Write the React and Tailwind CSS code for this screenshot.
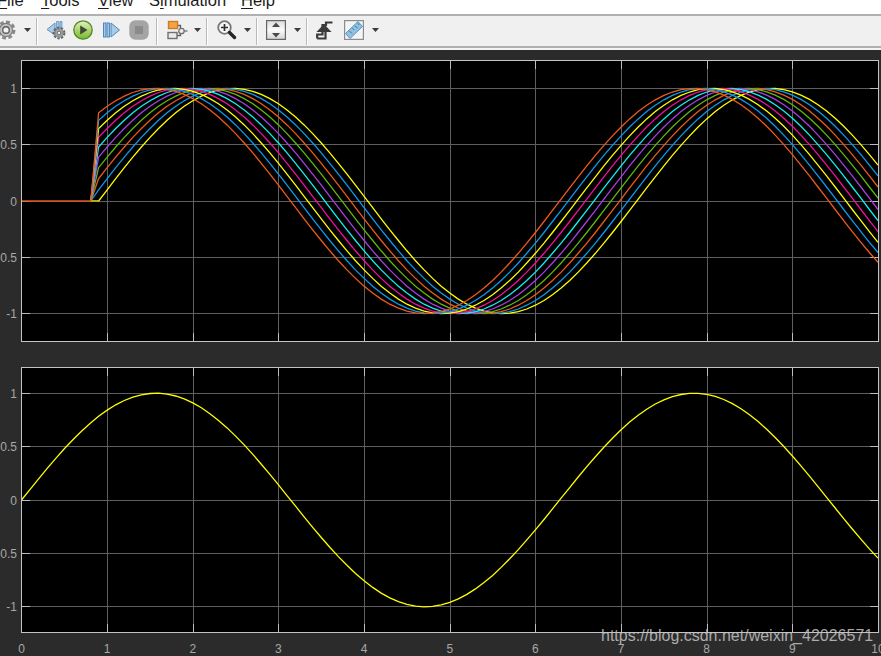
import React from "react";

const X0 = 21.5;
const XS = 85.65;
const xp = (t) => X0 + t * XS;

const SCOPE_COLORS = ["#ffff00", "#0a9bec", "#ee5a1c", "#62b80c", "#a83fe0", "#13f0f0", "#f0109c", "#ffff00", "#0a9bec", "#ee5a1c"];

// delayed sine, held at zero until the block switches on
function delayedPoints(delay, mid, ys) {
  const pts = [`${xp(0.81)},${mid}`];
  for (let i = 9; i <= 100; i++) {
    const t = i / 10;
    const v = Math.sin(Math.max(t - delay, 0));
    pts.push(`${xp(t).toFixed(1)},${(mid - v * ys).toFixed(1)}`);
  }
  return pts.join(" ");
}

function sinePoints(mid, ys) {
  const pts = [];
  for (let i = 0; i <= 100; i++) {
    const t = i / 10;
    pts.push(`${xp(t).toFixed(1)},${(mid - Math.sin(t) * ys).toFixed(1)}`);
  }
  return pts.join(" ");
}

function Plot({ height, bottom, mid, ys, showX, children }) {
  const yTicks = [
    [1, "1"],
    [0.5, "0.5"],
    [0, "0"],
    [-0.5, "-0.5"],
    [-1, "-1"],
  ];
  return (
    <svg width="881" height={height} className="block" style={{ fontFamily: '"Liberation Sans", Arial, sans-serif' }}>
      <rect x="21.5" y="0.5" width="857" height={bottom} fill="#000" />
      {[1, 2, 3, 4, 5, 6, 7, 8, 9].map((t) => (
        <g key={t}>
          <line x1={Math.round(xp(t)) + 0.5} x2={Math.round(xp(t)) + 0.5} y1="0.5" y2={bottom + 0.5} stroke="#5f5f5f" />
          <line x1={Math.round(xp(t)) + 0.5} x2={Math.round(xp(t)) + 0.5} y1="0.5" y2="9" stroke="#bdbdbd" />
          <line x1={Math.round(xp(t)) + 0.5} x2={Math.round(xp(t)) + 0.5} y1={bottom - 8} y2={bottom + 0.5} stroke="#bdbdbd" />
        </g>
      ))}
      {yTicks.map(([v, label]) => {
        const y = Math.floor(mid - v * ys) + 0.5;
        return (
          <g key={label}>
            <line x1="21.5" x2="878.5" y1={y} y2={y} stroke="#5f5f5f" />
            <line x1="21.5" x2="30" y1={y} y2={y} stroke="#bdbdbd" />
            <line x1="870" x2="878.5" y1={y} y2={y} stroke="#bdbdbd" />
            <text x="17" y={y + 4.5} textAnchor="end" fontSize="12" fill="#a8a8a8">
              {label}
            </text>
          </g>
        );
      })}
      {children}
      <rect x="21.5" y="0.5" width="857" height={bottom} fill="none" stroke="#c4c4c4" />
      {showX &&
        [0, 1, 2, 3, 4, 5, 6, 7, 8, 9, 10].map((t) => (
          <text key={t} x={xp(t)} y={bottom + 20.5} textAnchor="middle" fontSize="12" fill="#a8a8a8">
            {t}
          </text>
        ))}
    </svg>
  );
}

function Sep() {
  return <div className="w-[2px] h-[27px] mt-[3px] bg-[#b9b9b9] border-r border-white shrink-0" />;
}

function Caret() {
  return (
    <svg width="7" height="4" className="shrink-0 block">
      <path d="M0 0H7L3.5 4Z" fill="#3c3c3c" />
    </svg>
  );
}

function Gear() {
  return (
    <svg width="20" height="20" viewBox="0 0 20 20" className="shrink-0 block">
      <circle cx="10" cy="10" r="8.2" fill="none" stroke="#8a8a8a" strokeWidth="2.6" strokeDasharray="4 2.4" />
      <circle cx="10" cy="10" r="6.6" fill="#c2c2c2" stroke="#7a7a7a" strokeWidth="1.2" />
      <circle cx="10" cy="10" r="3.3" fill="#f2f2f2" stroke="#606060" strokeWidth="1.4" />
    </svg>
  );
}

function StepBack() {
  return (
    <svg width="20" height="20" viewBox="0 0 20 20" className="shrink-0 block">
      <path d="M9 3L1 9.5L9 15Z" fill="#a9cbe8" stroke="#5b93c6" />
      <path d="M10.5 1.5H13V9H10.5ZM14 1.5H16V8H14Z" fill="#a9cbe8" stroke="#5b93c6" strokeWidth="0.8" />
      <circle cx="13" cy="13" r="5.4" fill="none" stroke="#666" strokeWidth="2" strokeDasharray="2.4 1.4" />
      <circle cx="13" cy="13" r="4.2" fill="#a6a6a6" stroke="#6a6a6a" strokeWidth="0.8" />
      <circle cx="13" cy="13" r="1.8" fill="#f2f2f2" stroke="#555" strokeWidth="0.8" />
    </svg>
  );
}

function Play() {
  return (
    <svg width="20" height="20" viewBox="0 0 20 20" className="shrink-0 block">
      <defs>
        <linearGradient id="pg" x1="0" y1="0" x2="0" y2="1">
          <stop offset="0" stopColor="#e4f2bc" />
          <stop offset="1" stopColor="#79b62c" />
        </linearGradient>
      </defs>
      <circle cx="10" cy="10" r="9.2" fill="url(#pg)" stroke="#4f8a2a" strokeWidth="1.3" />
      <path d="M7.2 5.5L14.5 10L7.2 14.5Z" fill="#3b4a30" />
    </svg>
  );
}

function StepForward() {
  return (
    <svg width="18" height="18" viewBox="0 0 18 18" className="shrink-0 block">
      <rect x="0.5" y="2" width="2.4" height="14" fill="#a9cbe8" stroke="#4d86bd" />
      <rect x="4" y="2" width="2.4" height="14" fill="#a9cbe8" stroke="#4d86bd" />
      <path d="M8 2L16.5 9L8 16Z" fill="#a9cbe8" stroke="#4d86bd" />
    </svg>
  );
}

function Stop() {
  return (
    <svg width="20" height="20" viewBox="0 0 20 20" className="shrink-0 block">
      <rect x="0.3" y="0.3" width="19.4" height="19.4" rx="6" fill="#a4a4a4" />
      <rect x="6" y="6" width="8" height="8" fill="#8a8a8a" />
    </svg>
  );
}

function Library() {
  return (
    <svg width="21" height="20" viewBox="0 0 21 20" className="shrink-0 block">
      <path d="M9 5.5H13.5V9M9 15.5H13.5V13" fill="none" stroke="#5f5f5f" strokeWidth="1.3" />
      <rect x="1.5" y="1.5" width="9" height="7" fill="#f2a544" stroke="#d07a26" strokeWidth="1.4" />
      <rect x="1" y="12.5" width="9" height="6" fill="#eaeaea" stroke="#707070" strokeWidth="1.4" />
      <circle cx="14.5" cy="11" r="2.7" fill="#ececec" stroke="#707070" strokeWidth="1.3" />
      <path d="M17.2 11H20.5" stroke="#707070" strokeWidth="1.3" />
    </svg>
  );
}

function Magnifier() {
  return (
    <svg width="20" height="20" viewBox="0 0 20 20" className="shrink-0 block">
      <circle cx="7.5" cy="7.5" r="6.3" fill="#f8f8f8" stroke="#777" strokeWidth="1.8" />
      <path d="M12.5 12.5L17.5 17.5" stroke="#262626" strokeWidth="3.4" strokeLinecap="round" />
      <path d="M4 7.5H11M7.5 4V11" stroke="#303030" strokeWidth="1.7" />
    </svg>
  );
}

function Autoscale() {
  return (
    <svg width="20" height="20" viewBox="0 0 20 20" className="shrink-0 block">
      <defs>
        <linearGradient id="ag" x1="0" y1="0" x2="0" y2="1">
          <stop offset="0" stopColor="#dcdcdc" />
          <stop offset="0.5" stopColor="#fbfbfb" />
          <stop offset="1" stopColor="#d4d4d4" />
        </linearGradient>
      </defs>
      <rect x="0.6" y="0.6" width="18.8" height="18.8" fill="url(#ag)" stroke="#666" strokeWidth="1.2" />
      <path d="M10 2.5L14 7H6Z" fill="#4a4a4a" />
      <path d="M10 17.5L14 13H6Z" fill="#4a4a4a" />
    </svg>
  );
}

function Trigger() {
  return (
    <svg width="17" height="19" viewBox="0 0 17 19" className="shrink-0 block">
      <path d="M1.2 17.5V13.5H6.5V4H10V1.5H16.5" fill="none" stroke="#3a3a3a" strokeWidth="2.2" />
      <path d="M1.2 17.5H9.5V10" fill="none" stroke="#3a3a3a" strokeWidth="2.2" />
      <path d="M8 3L15.5 11H0.5Z" fill="#3a3a3a" />
    </svg>
  );
}

function Ruler() {
  return (
    <svg width="20" height="20" viewBox="0 0 20 20" className="shrink-0 block">
      <rect x="0.6" y="0.6" width="18.8" height="18.8" fill="#f4f4f4" stroke="#8c8c8c" strokeWidth="1.2" />
      <path d="M1.5 13.5L14 1.5L18.5 6.5L6 18.5Z" fill="#8cc2e4" stroke="#5b93b8" />
      <path d="M5.5 11L8 13.5M8.5 8.2L10.2 10M11 5.7L13.5 8.2M13.6 3.3L15.2 5" stroke="#3f6f8e" />
    </svg>
  );
}

function Menu() {
  const items = [
    ["", "F", "ile", "w-[44px]"],
    ["", "T", "ools", "w-[57px]"],
    ["", "V", "iew", "w-[51px]"],
    ["S", "i", "mulation", "w-[92px]"],
    ["", "H", "elp", "w-[40px]"],
  ];
  return (
    <div className="h-[14px] bg-white overflow-hidden shrink-0">
      <div className="flex -mt-[9px] -ml-[3px] text-[16.5px] leading-[18px] text-[#1c1c1c]">
        {items.map(([before, mark, rest, w]) => (
          <span key={rest} className={`${w} shrink-0`}>
            {before}
            <span className="underline underline-offset-[2px]">{mark}</span>
            {rest}
          </span>
        ))}
      </div>
    </div>
  );
}

function Toolbar() {
  return (
    <div className="h-[34px] shrink-0 bg-[#f0f0f0] border-t-2 border-b-2 border-[#b0b0b0] pb-[2px] flex items-center -ml-[3px]">
      <div className="ml-[-1px]"><Gear /></div>
      <div className="ml-[8px]"><Caret /></div>
      <div className="ml-[5px]"><Sep /></div>
      <div className="ml-[8px]"><StepBack /></div>
      <div className="ml-[7px]"><Play /></div>
      <div className="ml-[10px]"><StepForward /></div>
      <div className="ml-[8px]"><Stop /></div>
      <div className="ml-[7px]"><Sep /></div>
      <div className="ml-[9px]"><Library /></div>
      <div className="ml-[6px]"><Caret /></div>
      <div className="ml-[5px]"><Sep /></div>
      <div className="ml-[9px]"><Magnifier /></div>
      <div className="ml-[7px]"><Caret /></div>
      <div className="ml-[5px]"><Sep /></div>
      <div className="ml-[8px]"><Autoscale /></div>
      <div className="ml-[8px]"><Caret /></div>
      <div className="ml-[5px]"><Sep /></div>
      <div className="ml-[8px]"><Trigger /></div>
      <div className="ml-[11px]"><Ruler /></div>
      <div className="ml-[8px]"><Caret /></div>
    </div>
  );
}

export default function App() {
  const delays = [0.9, 0.8, 0.7, 0.6, 0.5, 0.4, 0.3, 0.2, 0.1, 0];
  return (
    <div className="relative w-[881px] h-[656px] overflow-hidden flex flex-col bg-[#2b2b2b] font-['Liberation_Sans',Arial,sans-serif]">
      <Menu />
      <Toolbar />
      <div className="h-[2px] bg-[#f4f4f4] shrink-0" />
      <div className="pt-[10px] flex flex-col gap-[25px]">
        <Plot height={282} bottom={281} mid={141} ys={112.6}>
          {delays.map((d, i) => (
            <polyline key={d} points={delayedPoints(d, 141, 112.6)} fill="none" stroke={SCOPE_COLORS[i]} strokeWidth="1.3" />
          ))}
          <line x1="21.5" x2={xp(0.81)} y1="141" y2="141" stroke="#e0561c" strokeWidth="1.6" />
          <line x1={xp(0.81)} x2={xp(0.9)} y1="141" y2="141" stroke="#a8a810" strokeWidth="1.6" />
        </Plot>
        <Plot height={290} bottom={265} mid={133} ys={106.8} showX>
          <polyline points={sinePoints(133, 106.8)} fill="none" stroke="#ffff00" strokeWidth="1.3" />
        </Plot>
      </div>
      <div className="absolute left-[601px] top-[626px] text-[16px] leading-[20px] text-[#c4c4c4]/85 whitespace-nowrap">
        https://blog.csdn.net/weixin_42026571
      </div>
    </div>
  );
}
